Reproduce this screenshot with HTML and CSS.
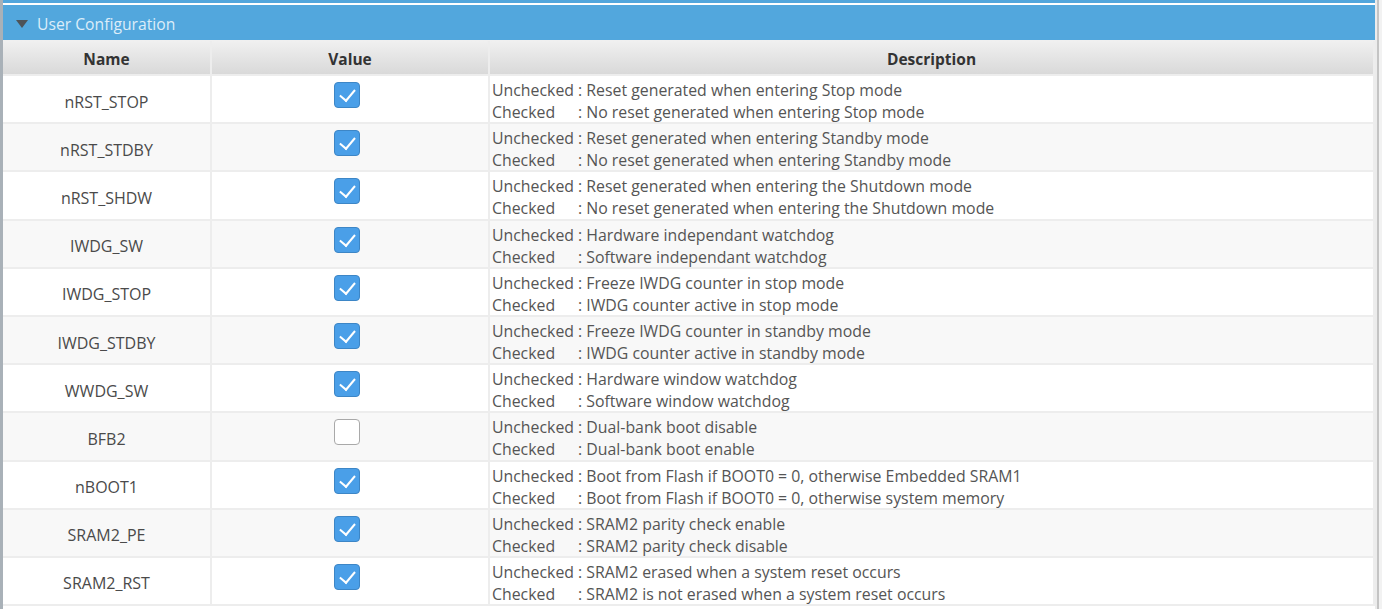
FILE: index.html
```html
<!DOCTYPE html>
<html>
<head>
<meta charset="utf-8">
<link rel="stylesheet" href="styles.css">
</head>
<body>
<div class="page">
  <div class="main">
    <div class="topstrip"></div>
    <div class="section-head">
      <span class="tri"></span>
      <span class="section-title">User Configuration</span>
    </div>
    <div class="table">
      <div class="th">Name</div>
      <div class="th">Value</div>
      <div class="th">Description</div>

      <div class="td name">nRST_STOP</div>
      <div class="td val"><span class="cb on"></span></div>
      <div class="td desc"><div><span class="lbl">Unchecked</span>: Reset generated when entering Stop mode</div><div><span class="lbl">Checked</span>: No reset generated when entering Stop mode</div></div>

      <div class="td name alt">nRST_STDBY</div>
      <div class="td val alt"><span class="cb on"></span></div>
      <div class="td desc alt"><div><span class="lbl">Unchecked</span>: Reset generated when entering Standby mode</div><div><span class="lbl">Checked</span>: No reset generated when entering Standby mode</div></div>

      <div class="td name">nRST_SHDW</div>
      <div class="td val"><span class="cb on"></span></div>
      <div class="td desc"><div><span class="lbl">Unchecked</span>: Reset generated when entering the Shutdown mode</div><div><span class="lbl">Checked</span>: No reset generated when entering the Shutdown mode</div></div>

      <div class="td name alt">IWDG_SW</div>
      <div class="td val alt"><span class="cb on"></span></div>
      <div class="td desc alt"><div><span class="lbl">Unchecked</span>: Hardware independant watchdog</div><div><span class="lbl">Checked</span>: Software independant watchdog</div></div>

      <div class="td name">IWDG_STOP</div>
      <div class="td val"><span class="cb on"></span></div>
      <div class="td desc"><div><span class="lbl">Unchecked</span>: Freeze IWDG counter in stop mode</div><div><span class="lbl">Checked</span>: IWDG counter active in stop mode</div></div>

      <div class="td name alt">IWDG_STDBY</div>
      <div class="td val alt"><span class="cb on"></span></div>
      <div class="td desc alt"><div><span class="lbl">Unchecked</span>: Freeze IWDG counter in standby mode</div><div><span class="lbl">Checked</span>: IWDG counter active in standby mode</div></div>

      <div class="td name">WWDG_SW</div>
      <div class="td val"><span class="cb on"></span></div>
      <div class="td desc"><div><span class="lbl">Unchecked</span>: Hardware window watchdog</div><div><span class="lbl">Checked</span>: Software window watchdog</div></div>

      <div class="td name alt">BFB2</div>
      <div class="td val alt"><span class="cb"></span></div>
      <div class="td desc alt"><div><span class="lbl">Unchecked</span>: Dual-bank boot disable</div><div><span class="lbl">Checked</span>: Dual-bank boot enable</div></div>

      <div class="td name">nBOOT1</div>
      <div class="td val"><span class="cb on"></span></div>
      <div class="td desc"><div><span class="lbl">Unchecked</span>: Boot from Flash if BOOT0 = 0, otherwise Embedded SRAM1</div><div><span class="lbl">Checked</span>: Boot from Flash if BOOT0 = 0, otherwise system memory</div></div>

      <div class="td name alt">SRAM2_PE</div>
      <div class="td val alt"><span class="cb on"></span></div>
      <div class="td desc alt"><div><span class="lbl">Unchecked</span>: SRAM2 parity check enable</div><div><span class="lbl">Checked</span>: SRAM2 parity check disable</div></div>

      <div class="td name">SRAM2_RST</div>
      <div class="td val"><span class="cb on"></span></div>
      <div class="td desc"><div><span class="lbl">Unchecked</span>: SRAM2 erased when a system reset occurs</div><div><span class="lbl">Checked</span>: SRAM2 is not erased when a system reset occurs</div></div>
    </div>
  </div>
  <div class="scroll"></div>
</div>
</body>
</html>
```

FILE: styles.css
```css
html, body {
  margin: 0;
  padding: 0;
  background: #ffffff;
  overflow: hidden;
}
body {
  font-family: "Open Sans", "Noto Sans", sans-serif;
  font-size: 16px;
  color: #555;
}
.page {
  display: flex;
  height: 609px;
  border-left: 3px solid #a9b1b8;
  box-sizing: border-box;
}
.main {
  flex: 1;
  display: flex;
  flex-direction: column;
}
.scroll {
  width: 7px;
  background: linear-gradient(to right, #ececec 0 2px, #c4c4c4 2px 4px, #f2f2f2 4px);
}
.topstrip {
  height: 3px;
  background: #52a6dc;
  border-bottom: 2px solid #ffffff;
}
.section-head {
  height: 36px;
  background: #52a7dd;
  display: flex;
  align-items: center;
  padding-left: 13px;
  padding-top: 2px;
  box-sizing: border-box;
  border-bottom: 1px solid #f0f0f0;
}
.tri {
  width: 0;
  height: 0;
  border-left: 6px solid transparent;
  border-right: 6px solid transparent;
  border-top: 8px solid #4d5358;
  margin-right: 9px;
}
.section-title {
  color: #dcedf9;
  font-size: 15.7px;
}
.table {
  display: grid;
  grid-template-columns: 207px 276px 1fr;
  grid-template-rows: 33px;
  grid-auto-rows: 46.2px;
  column-gap: 2px;
  row-gap: 2px;
  background: #ededed;
  border-right: 2px solid #ededed;
  padding-bottom: 2px;
}
.th {
  background: linear-gradient(to bottom, #f0f0f0, #d9d9d9);
  font-weight: bold;
  color: #333;
  display: flex;
  align-items: center;
  justify-content: center;
  font-size: 15.5px;
  padding-top: 3px;
  box-sizing: border-box;
}
.td {
  background: #ffffff;
  display: flex;
  align-items: center;
  box-sizing: border-box;
}
.td.alt {
  background: #f8f8f8;
}
.name {
  justify-content: center;
  color: #4a4a4a;
  padding-top: 5px;
}
.val {
  justify-content: center;
  align-items: flex-start;
  padding-right: 6px;
  padding-top: 6px;
}
.desc {
  flex-direction: column;
  align-items: flex-start;
  justify-content: center;
  padding-left: 2px;
  padding-top: 4px;
  line-height: 22px;
  font-size: 15.85px;
  color: #555;
}
.lbl {
  display: inline-block;
  width: 86px;
}
.cb {
  width: 24px;
  height: 24px;
  border: 1px solid #a9a9a9;
  border-radius: 4px;
  background: #ffffff;
  box-sizing: content-box;
  position: relative;
}
.cb.on {
  background: #4a9fe8;
  border-color: #3d86c6;
}
.cb.on::after {
  content: "";
  position: absolute;
  left: 8px;
  top: 3px;
  width: 7px;
  height: 13px;
  border-right: 2.5px solid #fff;
  border-bottom: 2.5px solid #fff;
  transform: rotate(40deg);
}
```
